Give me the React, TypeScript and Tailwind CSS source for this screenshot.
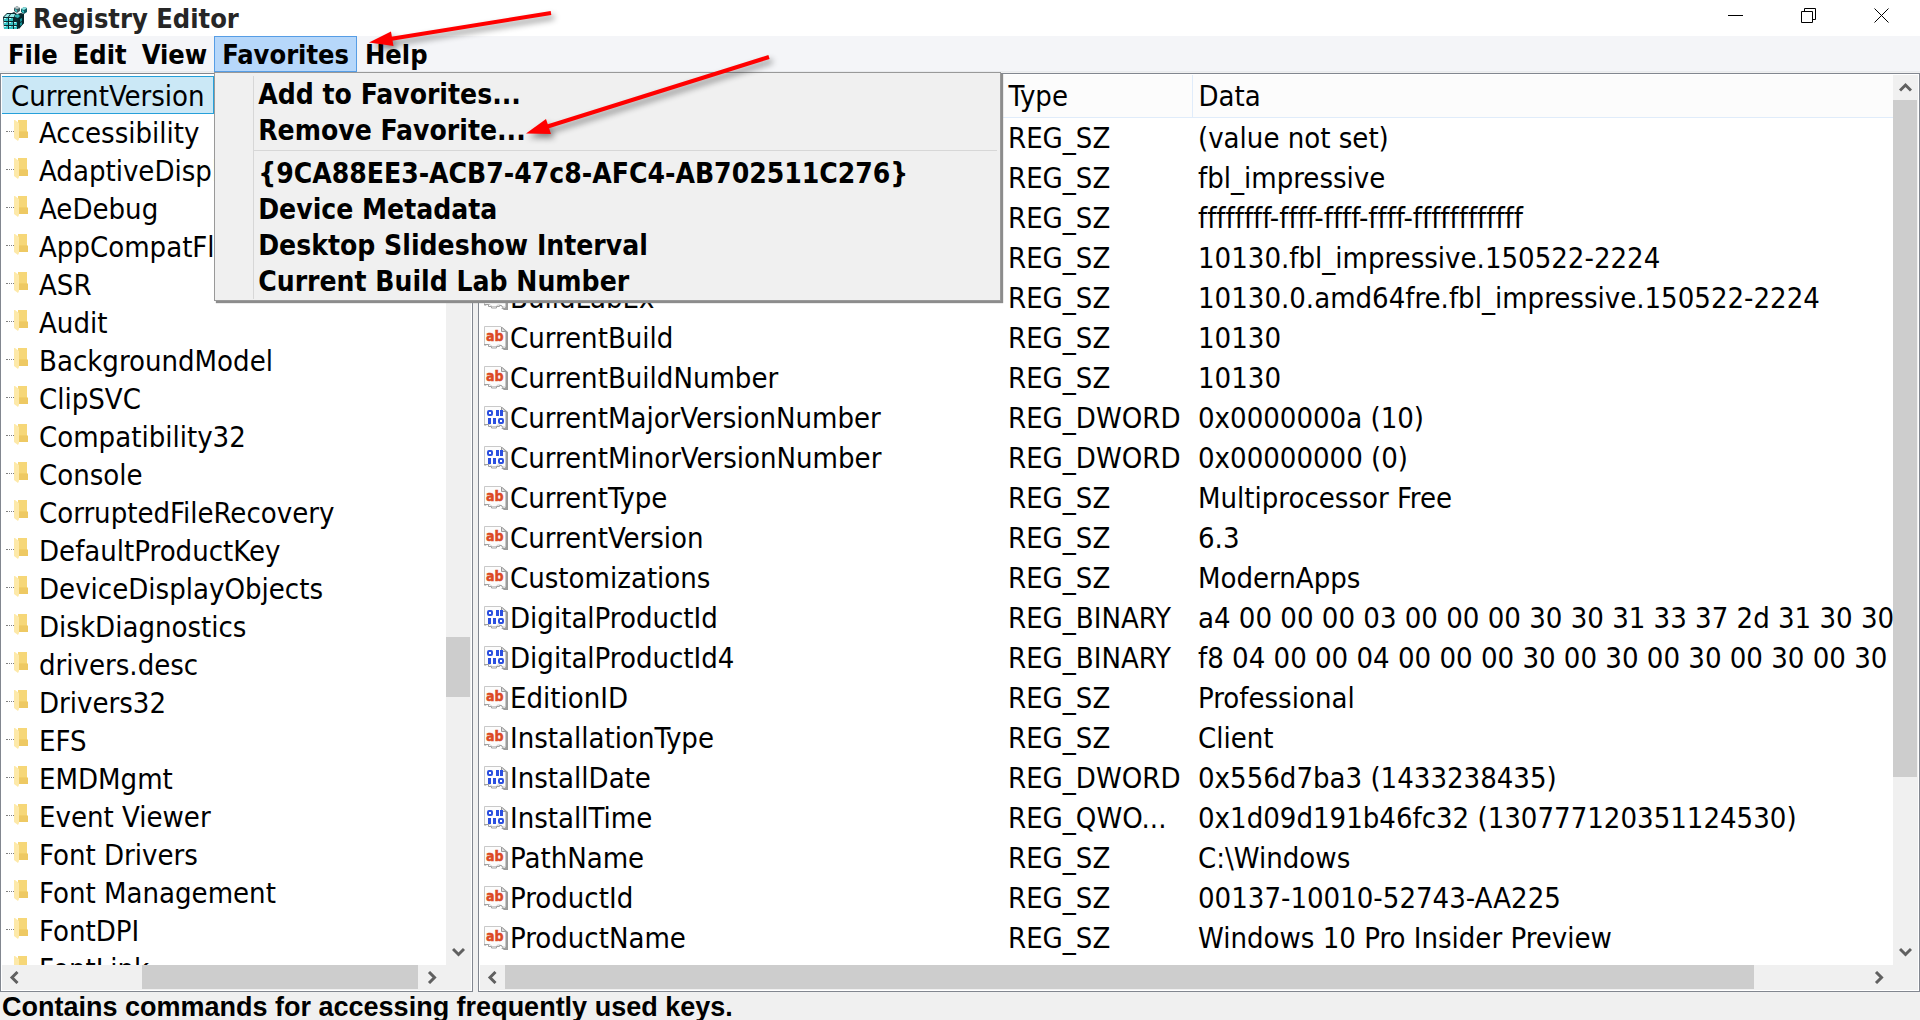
import React from "react";

const treeKeys = [
  "Accessibility",
  "AdaptiveDisplayBrightness",
  "AeDebug",
  "AppCompatFlags",
  "ASR",
  "Audit",
  "BackgroundModel",
  "ClipSVC",
  "Compatibility32",
  "Console",
  "CorruptedFileRecovery",
  "DefaultProductKey",
  "DeviceDisplayObjects",
  "DiskDiagnostics",
  "drivers.desc",
  "Drivers32",
  "EFS",
  "EMDMgmt",
  "Event Viewer",
  "Font Drivers",
  "Font Management",
  "FontDPI",
  "FontLink",
];

type Value = { name: string; type: string; data: string };

const values: Value[] = [
  { name: "(Default)", type: "REG_SZ", data: "(value not set)" },
  { name: "BuildBranch", type: "REG_SZ", data: "fbl_impressive" },
  { name: "BuildGUID", type: "REG_SZ", data: "ffffffff-ffff-ffff-ffff-ffffffffffff" },
  { name: "BuildLab", type: "REG_SZ", data: "10130.fbl_impressive.150522-2224" },
  { name: "BuildLabEx", type: "REG_SZ", data: "10130.0.amd64fre.fbl_impressive.150522-2224" },
  { name: "CurrentBuild", type: "REG_SZ", data: "10130" },
  { name: "CurrentBuildNumber", type: "REG_SZ", data: "10130" },
  { name: "CurrentMajorVersionNumber", type: "REG_DWORD", data: "0x0000000a (10)" },
  { name: "CurrentMinorVersionNumber", type: "REG_DWORD", data: "0x00000000 (0)" },
  { name: "CurrentType", type: "REG_SZ", data: "Multiprocessor Free" },
  { name: "CurrentVersion", type: "REG_SZ", data: "6.3" },
  { name: "Customizations", type: "REG_SZ", data: "ModernApps" },
  { name: "DigitalProductId", type: "REG_BINARY", data: "a4 00 00 00 03 00 00 00 30 30 31 33 37 2d 31 30 30" },
  { name: "DigitalProductId4", type: "REG_BINARY", data: "f8 04 00 00 04 00 00 00 30 00 30 00 30 00 30 00 30 00" },
  { name: "EditionID", type: "REG_SZ", data: "Professional" },
  { name: "InstallationType", type: "REG_SZ", data: "Client" },
  { name: "InstallDate", type: "REG_DWORD", data: "0x556d7ba3 (1433238435)" },
  { name: "InstallTime", type: "REG_QWO...", data: "0x1d09d191b46fc32 (130777120351124530)" },
  { name: "PathName", type: "REG_SZ", data: "C:\\Windows" },
  { name: "ProductId", type: "REG_SZ", data: "00137-10010-52743-AA225" },
  { name: "ProductName", type: "REG_SZ", data: "Windows 10 Pro Insider Preview" },
];

const favorites = [
  "{9CA88EE3-ACB7-47c8-AFC4-AB702511C276}",
  "Device Metadata",
  "Desktop Slideshow Interval",
  "Current Build Lab Number",
];

function RegistryIcon() {
  return (
    <svg className="size-6 shrink-0" viewBox="0 0 24 24" aria-hidden="true">
      <path d="M0 11 4 7h5l2-1 3 2 4-1 3 1v9l-6 6H1Z" fill="#0b2b30" />
      <path d="M15 12l6-4v9l-5 6Z" fill="#06262b" />
      <path d="M1 11l3-3h3l-2 3ZM6 11l2-3h4l-1 3Z" fill="#9aebe8" />
      <g fill="#35c3c4">
        <rect x="1" y="12" width="4" height="3" />
        <rect x="6" y="12" width="4" height="3" />
        <rect x="1" y="16" width="4" height="3" />
        <rect x="6" y="16" width="4" height="3" />
        <rect x="11" y="16" width="3" height="3" />
        <rect x="1" y="20" width="4" height="3" />
        <rect x="6" y="20" width="4" height="3" />
        <rect x="11" y="20" width="3" height="3" />
      </g>
      <g fill="#c2f6f4">
        <rect x="1" y="12" width="2" height="1" />
        <rect x="6" y="12" width="2" height="1" />
        <rect x="1" y="16" width="2" height="1" />
        <rect x="6" y="16" width="2" height="1" />
        <rect x="11" y="16" width="2" height="1" />
        <rect x="1" y="20" width="2" height="1" />
        <rect x="6" y="20" width="2" height="1" />
        <rect x="11" y="20" width="2" height="1" />
      </g>
      <path d="M17 13l2-1v3l-2 1ZM17 17l2-1v3l-2 1Z" fill="#158f93" />
      <path d="M11 2l3-2 3 2v3l-3 2-3-2Z" fill="#3d5c60" />
      <path d="M11 2l3-2 3 2-3 1Z" fill="#b8c4c6" />
      <path d="M12 3l2 1v2l-2-1Z" fill="#35c3c4" />
      <path d="M18 3l3-2 3 1v4l-3 2-3-2Z" fill="#0f5a60" />
      <path d="M18 3l3-2 3 1-3 2Z" fill="#8be4e2" />
      <path d="M19 4l2 1v2l-2-1Z" fill="#35c3c4" />
      <path d="M12 9l3-1 2 2-2 2-3-1Z" fill="#2fb1b3" />
    </svg>
  );
}

function FolderIcon() {
  return (
    <svg className="h-[22px] w-[14px] shrink-0" viewBox="0 0 14 22" aria-hidden="true">
      <path d="M4 0h9v11l1 1v6H4Z" fill="#f2cf68" />
      <path d="M4 0h9v11H4Z" fill="#f6d778" />
      <path d="M4 12h10v6H4Z" fill="#eec963" />
      <path d="M0 0h1l4 3v16l-1 2-4-3Z" fill="#fde9a9" />
    </svg>
  );
}

function ValueIcon({ binary }: { binary: boolean }) {
  return (
    <svg className="size-6 shrink-0" viewBox="0 0 24 24" aria-hidden="true">
      <path d="M18 1l6 5v18h-4l-3-2h4V6Z" fill="#9b9b9b" />
      <path d="M.5 19.500V.5H17l4.500 5V21h-3l-2-2h-3l-1 1.500H8l-2-2H3l-1 1Z" fill="#fcfcfc" stroke="#c9c9c9" />
      <path d="M0 18.500h4.500v2h3v1.500h5V20.500h3v-1h2l2 3h3" fill="none" stroke="#a0a0a0" />
      <path d="M17.500 1v4.500H22Z" fill="#e4e4e4" stroke="#9b9b9b" />
      {binary ? (
        <g fill="#2b4fe0">
          <rect x="4" y="5" width="4" height="4" rx="1" fill="none" stroke="#2b4fe0" strokeWidth="2" />
          <rect x="12" y="4" width="3" height="6" />
          <rect x="16" y="4" width="3" height="6" />
          <rect x="4" y="12" width="3" height="6" />
          <rect x="9" y="12" width="3" height="6" />
          <rect x="15" y="13" width="4" height="4" rx="1" fill="none" stroke="#2b4fe0" strokeWidth="2" />
        </g>
      ) : (
        <text
          x="2"
          y="15"
          fill="#dc4a24"
          stroke="#dc4a24"
          strokeWidth="0.5"
          fontSize="14"
          fontWeight="700"
          fontFamily="DejaVu Sans Condensed, sans-serif"
        >
          ab
        </text>
      )}
    </svg>
  );
}

const chevrons = {
  up: "M1 9.500 6.500 4 12 9.500",
  down: "M1 4 6.500 9.500 12 4",
  left: "M9.500 1 4 6.500 9.500 12",
  right: "M4 1 9.500 6.500 4 12",
};

function ScrollArrow({ dir }: { dir: keyof typeof chevrons }) {
  return (
    <button type="button" aria-label={`Scroll ${dir}`} className="flex size-[25px] shrink-0 items-center justify-center">
      <svg className="size-[13px]" viewBox="0 0 13 13" fill="none" stroke="#606060" strokeWidth="3" aria-hidden="true">
        <path d={chevrons[dir]} />
      </svg>
    </button>
  );
}

function VerticalBar({ before, thumb, after }: { before: number; thumb: number; after: number }) {
  return (
    <div className="flex w-[25px] shrink-0 flex-col items-start bg-[#f0f0f0] pb-px">
      <ScrollArrow dir="up" />
      <div style={{ flexGrow: before }} />
      <div className="w-6 bg-[#cdcdcd]" style={{ flexGrow: thumb }} />
      <div style={{ flexGrow: after }} />
      <ScrollArrow dir="down" />
    </div>
  );
}

function HorizontalBar({ before, thumb, after }: { before: number; thumb: number; after: number }) {
  return (
    <div className="flex h-[25px] shrink-0 items-start bg-[#f0f0f0] pr-[27px]">
      <ScrollArrow dir="left" />
      <div style={{ flexGrow: before }} />
      <div className="h-6 bg-[#cdcdcd]" style={{ flexGrow: thumb }} />
      <div style={{ flexGrow: after }} />
      <ScrollArrow dir="right" />
    </div>
  );
}

function MenuEntry({ label }: { label: string }) {
  return (
    <button type="button" role="menuitem" className="block h-9 w-full pt-px pl-1 text-left text-[28px] leading-9 font-bold whitespace-nowrap">
      {label}
    </button>
  );
}

function FavoritesMenu() {
  return (
    <div
      role="menu"
      aria-label="Favorites"
      className="absolute top-full left-0 z-10 w-[787px] border border-[#999999] bg-[#f0f0f0] pt-[3px] pr-[3px] pb-px pl-[38px] shadow-[2px_2px_1px_#8c8c8c]"
    >
      <div className="border-l border-[#d7d7d7]">
        <MenuEntry label="Add to Favorites..." />
        <MenuEntry label="Remove Favorite..." />
        <div role="separator" className="mt-[2px] mb-1 h-px bg-[#d7d7d7]" />
        {favorites.map((f) => (
          <MenuEntry key={f} label={f} />
        ))}
      </div>
    </div>
  );
}

function MenuButton({ label }: { label: string }) {
  return (
    <button type="button" className="h-full pt-px pr-[7px] pl-2 text-[27px] leading-9 font-bold">
      {label}
    </button>
  );
}

function CalloutArrows() {
  return (
    <svg
      className="pointer-events-none absolute top-0 left-[360px] z-20 h-[150px] w-[420px] drop-shadow-[3px_4px_3px_rgba(0,0,0,0.45)]"
      viewBox="360 0 420 150"
      aria-hidden="true"
    >
      <g stroke="#ff0000" strokeWidth="4">
        <path d="M551 13 390 39" />
        <path d="M769 57 546 127" />
      </g>
      <g fill="#ff0000">
        <path d="M369 42.500 391 31.500 393.500 46Z" />
        <path d="M526 133.500 546 119 551 134Z" />
      </g>
    </svg>
  );
}

export default function App() {
  return (
    <div className="relative flex h-screen flex-col overflow-hidden bg-[#f0f0f0] font-['DejaVu_Sans_Condensed','DejaVu_Sans',sans-serif] text-black [font-variant-ligatures:none]">
      <header className="flex h-9 shrink-0 items-center bg-white pr-[2px] pl-[3px]">
        <RegistryIcon />
        <h1 className="flex-1 pt-px pl-[6px] text-[27px] leading-9 font-bold text-[#262626]">Registry Editor</h1>
        <div className="flex h-8 self-start">
          <button type="button" aria-label="Minimize" className="flex w-[73px] items-center justify-center">
            <svg className="size-4" viewBox="0 0 16 16" aria-hidden="true">
              <path d="M0 7.500h15" stroke="#000" />
            </svg>
          </button>
          <button type="button" aria-label="Restore" className="flex w-[73px] items-center justify-center">
            <svg className="size-4" viewBox="0 0 16 16" fill="none" stroke="#000" aria-hidden="true">
              <path d="M.5 3.500h11v11H.5ZM3.500 3.500v-3h11v11h-3" />
            </svg>
          </button>
          <button type="button" aria-label="Close" className="flex w-[73px] items-center justify-center">
            <svg className="size-4" viewBox="0 0 16 16" stroke="#000" aria-hidden="true">
              <path d="M.5.5l14 14M14.500.5l-14 14" />
            </svg>
          </button>
        </div>
      </header>

      <nav className="flex h-9 shrink-0 border-b border-[#e9ebee] bg-[#f4f5f8]">
        <MenuButton label="File" />
        <MenuButton label="Edit" />
        <MenuButton label="View" />
        <div className="relative h-9">
          <button
            type="button"
            aria-haspopup="menu"
            aria-expanded="true"
            className="h-9 border border-[#569de5] bg-[#b6d7fa] px-[7px] pt-px text-[27px] leading-[34px] font-bold"
          >
            Favorites
          </button>
          <FavoritesMenu />
        </div>
        <MenuButton label="Help" />
      </nav>

      <main className="flex min-h-0 flex-1 gap-[5px] pt-px text-[29px]">
        <section aria-label="Keys" className="flex w-[473px] shrink-0 flex-col border border-[#828790] bg-white p-px">
          <div className="flex min-h-0 flex-1">
            <ul className="min-w-0 flex-1 overflow-hidden whitespace-nowrap">
              <li className="h-[38px]">
                <button
                  type="button"
                  className="h-[38px] w-[212px] border-y border-r border-[#26a0da] bg-[#cbe8f6] pt-px pl-[9px] text-left leading-9"
                >
                  CurrentVersion
                </button>
              </li>
              {treeKeys.map((k) => (
                <li key={k}>
                  <button type="button" className="flex h-[38px] items-center pt-[2px] pl-1 leading-9">
                    <span className="mb-1 w-2 border-t border-dotted border-[#808080]" />
                    <span className="mb-1">
                      <FolderIcon />
                    </span>
                    <span className="pl-[11px]">{k}</span>
                  </button>
                </li>
              ))}
            </ul>
            <VerticalBar before={536} thumb={60} after={242} />
          </div>
          <HorizontalBar before={115} thumb={276} after={1} />
        </section>

        <section aria-label="Values" className="flex min-w-0 flex-1 flex-col border border-[#828790] bg-white p-px">
          <div className="flex min-h-0 flex-1">
            <div className="min-w-0 flex-1 overflow-hidden">
              <table className="w-full table-fixed border-collapse text-left whitespace-nowrap">
                <colgroup>
                  <col className="w-[522px]" />
                  <col className="w-[190px]" />
                  <col />
                </colgroup>
                <thead>
                  <tr className="h-[42px] border-b border-[#e0ecfa] bg-[#fcfcfc] leading-10">
                    <th className="border-r border-[#e0ecfa] p-0 pt-px pl-[6px] font-normal">Name</th>
                    <th className="border-r border-[#e0ecfa] p-0 pt-px pl-[6px] font-normal">Type</th>
                    <th className="p-0 pt-px pl-[6px] font-normal">Data</th>
                  </tr>
                </thead>
                <tbody>
                  {values.map((v) => (
                    <tr key={v.name} className="h-10 leading-10">
                      <td className="p-0 pl-1">
                        <span className="flex h-10 items-center gap-[2px]">
                          <ValueIcon binary={v.type !== "REG_SZ"} />
                          {v.name}
                        </span>
                      </td>
                      <td className="p-0 pl-[6px]">{v.type}</td>
                      <td className="overflow-hidden p-0 pl-[6px]">{v.data}</td>
                    </tr>
                  ))}
                </tbody>
              </table>
            </div>
            <VerticalBar before={0} thumb={676} after={162} />
          </div>
          <HorizontalBar before={0} thumb={1249} after={112} />
        </section>
      </main>

      <footer className="h-7 shrink-0 pt-px pl-[2px] font-['Liberation_Sans',sans-serif] text-[27px] leading-7 font-bold">
        Contains commands for accessing frequently used keys.
      </footer>

      <CalloutArrows />
    </div>
  );
}
